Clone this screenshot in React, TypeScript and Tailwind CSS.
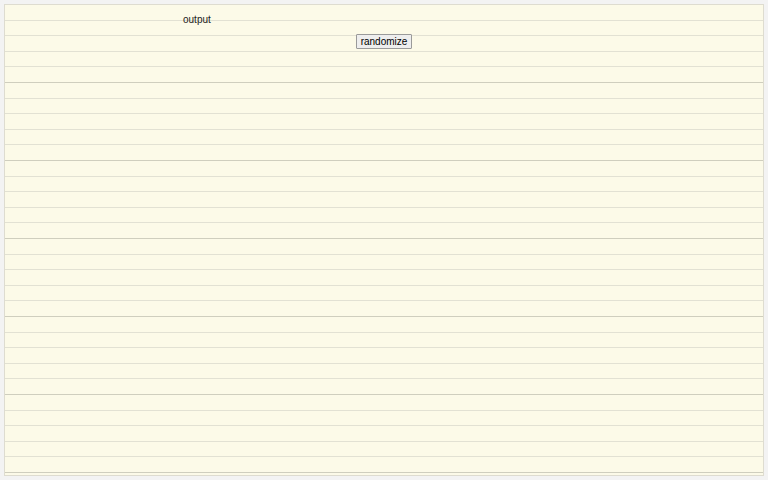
export default function App() {
  return (
    <div className="w-[768px] h-[480px] bg-[#f3f3f3] p-[4px] font-['Liberation_Sans',Arial,sans-serif] text-[#222]">
      <div className="h-[472px] border border-[#dedcd0] bg-[#fcfae8] bg-[repeating-linear-gradient(to_bottom,transparent_0,transparent_77px,#cfcebe_77px,#cfcebe_78px),repeating-linear-gradient(to_bottom,transparent_0,transparent_14.6px,#e2e1d3_14.6px,#e2e1d3_15.6px)] flex flex-col">
        <div className="pl-[178px] pt-[9px] text-[10px] leading-[12px]">output</div>
        <div className="flex justify-center mt-[8px]">
          <button className="text-[10px] leading-[13px] px-[4px] py-0 border border-[#9a9a9a] bg-[#eeeeee] rounded-[1px] text-black">
            randomize
          </button>
        </div>
      </div>
    </div>
  )
}
